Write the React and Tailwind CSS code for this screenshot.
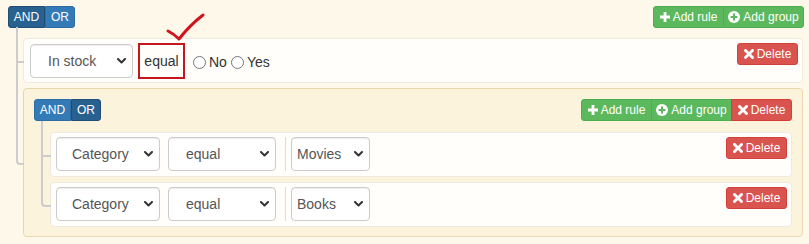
import React from 'react';

const font = "font-['Liberation_Sans',Arial,Helvetica,sans-serif]";

function Chevron() {
  return (
    <svg width="9" height="6" viewBox="0 0 9 6" className="shrink-0">
      <path d="M1 1 L4.5 4.5 L8 1" fill="none" stroke="#333" strokeWidth="2" strokeLinecap="round" strokeLinejoin="round" />
    </svg>
  );
}

function Select({ label, w, pl }) {
  return (
    <div className={`${w} ${pl} h-[34px] shrink-0 flex items-center justify-between pr-[6px] bg-white border border-[#ccc] rounded-[4px] text-[14px] text-[#555] shadow-[inset_0_1px_1px_rgba(0,0,0,0.075)]`}>
      <span>{label}</span>
      <Chevron />
    </div>
  );
}

function PlusIcon() {
  return (
    <svg width="10" height="10" viewBox="0 0 10 10" className="shrink-0">
      <path d="M3.6 0h2.8v3.6H10v2.8H6.4V10H3.6V6.4H0V3.6h3.6z" fill="#fff" />
    </svg>
  );
}

function PlusSignIcon() {
  return (
    <svg width="12" height="12" viewBox="0 0 12 12" className="shrink-0">
      <circle cx="6" cy="6" r="6" fill="#fff" />
      <path d="M5 2.6h2v2.4h2.4v2H7v2.4H5V7H2.6V5H5z" fill="#5cb85c" />
    </svg>
  );
}

function RemoveIcon() {
  return (
    <svg width="10" height="10" viewBox="0 0 10 10" className="shrink-0">
      <path d="M1.5 1.5 L8.5 8.5 M8.5 1.5 L1.5 8.5" stroke="#fff" strokeWidth="2.8" strokeLinecap="square" />
    </svg>
  );
}

function AndOr({ active }) {
  const on = 'bg-[#286090] border-[#204d74]';
  const off = 'bg-[#337ab7] border-[#2e6da4]';
  return (
    <div className="flex h-[22px] text-[12px] text-white">
      <span className={`w-[37px] flex items-center justify-center border rounded-l-[3px] ${active === 'AND' ? on : off}`}>AND</span>
      <span className={`w-[30px] flex items-center justify-center border rounded-r-[3px] ${active === 'OR' ? on : off}`}>OR</span>
    </div>
  );
}

function GroupActions({ withDelete }) {
  return (
    <div className="flex h-[22px] text-[12px] text-white">
      <span className="w-[71px] flex items-center justify-center gap-[3px] bg-[#5cb85c] border border-[#4cae4c] rounded-l-[3px]">
        <PlusIcon />Add rule
      </span>
      <span className={`w-[81px] flex items-center justify-center gap-[3px] bg-[#5cb85c] border border-[#4cae4c] -ml-px ${withDelete ? '' : 'rounded-r-[3px]'}`}>
        <PlusSignIcon />Add group
      </span>
      {withDelete && (
        <span className="w-[61px] flex items-center justify-center gap-[3px] bg-[#d9534f] border border-[#d43f3a] -ml-px rounded-r-[3px]">
          <RemoveIcon />Delete
        </span>
      )}
    </div>
  );
}

function DeleteBtn() {
  return (
    <span className="w-[61px] h-[22px] shrink-0 flex items-center justify-center gap-[3px] bg-[#d9534f] border border-[#d43f3a] rounded-[3px] text-[12px] text-white">
      <RemoveIcon />Delete
    </span>
  );
}

function Connector({ first, last, off }) {
  return (
    <>
      <span
        className={`absolute ${off} ${first ? 'top-[-12px] h-[calc(50%+14px)]' : 'top-[-5px] h-[calc(50%+7px)]'} border-l-2 border-b-2 border-[#ccc] ${last ? 'rounded-bl-[4px]' : ''}`}
      />
      {!last && <span className={`absolute ${off} top-[50%] h-[calc(50%+5px)] border-l-2 border-[#ccc]`} />}
    </>
  );
}

function Radio({ label }) {
  return (
    <span className="flex items-center gap-[3px]">
      <span className="w-[13px] h-[13px] rounded-full border border-[#767676] bg-white" />
      <span>{label}</span>
    </span>
  );
}

function CategoryRule({ first, last, value }) {
  return (
    <div className="relative h-[45px] flex items-start justify-between pl-[5px] pt-[4px] pr-[4px] bg-[#fffefb] border border-[#efeae0] rounded-[4px]">
      <Connector first={first} last={last} off="left-[-10px] w-[10px]" />
      <div className="flex items-center gap-[8px]">
        <Select label="Category" w="w-[104px]" pl="pl-[15px]" />
        <Select label="equal" w="w-[108px]" pl="pl-[17px]" />
        <div className="ml-px pl-[5px] border-l border-[#ddd]">
          <Select label={value} w="w-[79px]" pl="pl-[5px]" />
        </div>
      </div>
      <DeleteBtn />
    </div>
  );
}

export default function App() {
  return (
    <div className={`${font} relative w-[809px] h-[244px] bg-[#fdf8ea] pt-[6px] pl-[8px] pr-[5px] overflow-hidden`}>
      <div className="flex justify-between items-center">
        <AndOr active="AND" />
        <GroupActions />
      </div>

      <div className="ml-[15px] mr-px mt-[10px] flex flex-col gap-[5px]">
        <div className="relative h-[45px] flex items-start justify-between pl-[6px] pt-[4px] pr-[4px] bg-[#fffefb] border border-[#efeae0] rounded-[4px]">
          <Connector first off="left-[-8px] w-[8px]" />
          <div className="flex items-center h-[36px] text-[14px] text-[#333]">
            <Select label="In stock" w="w-[103px]" pl="pl-[17px]" />
            <span className="ml-[5px] h-[36px] w-[47px] flex items-center justify-center border-2 border-[#c4161c] text-[#333]">equal</span>
            <span className="ml-[8px] mt-[2px] flex items-center gap-[4px]">
              <Radio label="No" />
              <Radio label="Yes" />
            </span>
          </div>
          <DeleteBtn />
        </div>

        <div className="relative h-[149px] bg-[#fcf3dc] border border-[#e8d7aa] rounded-[4px] pt-[10px] px-[10px]">
          <Connector last off="left-[-8px] w-[8px]" />
          <div className="flex justify-between items-center">
            <AndOr active="OR" />
            <GroupActions withDelete />
          </div>
          <div className="ml-[16px] mt-[11px] flex flex-col gap-[5px]">
            <CategoryRule first value="Movies" />
            <CategoryRule last value="Books" />
          </div>
        </div>
      </div>

      <svg className="absolute left-[160px] top-[10px]" width="50" height="34" viewBox="0 0 50 34">
        <path d="M8 21 C12 23 16 26 19 29 C26 20 34 12 43 5" fill="none" stroke="#d0141c" strokeWidth="3" strokeLinecap="round" strokeLinejoin="round" />
      </svg>
    </div>
  );
}
